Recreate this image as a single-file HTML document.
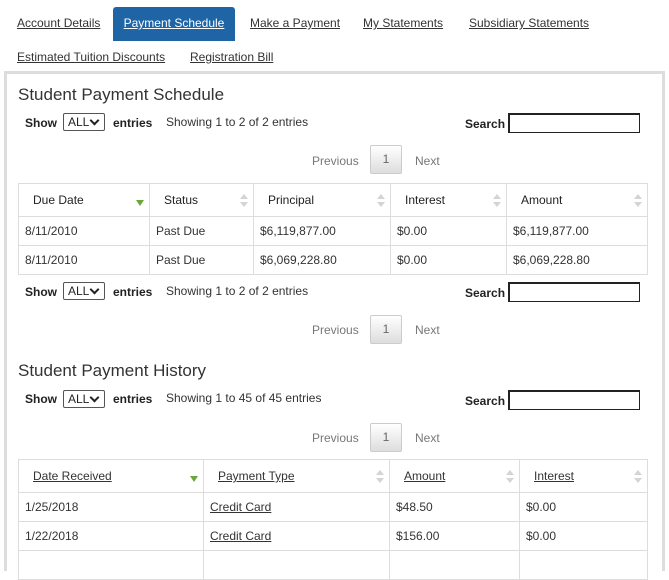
<!DOCTYPE html>
<html><head><meta charset="utf-8"><style>
*{margin:0;padding:0;box-sizing:border-box}
body{width:669px;height:553px;overflow:hidden;background:#fff;font-family:"Liberation Sans",sans-serif;font-size:12px;color:#333;position:relative}
.a{position:absolute;white-space:nowrap}
.u{text-decoration:underline;color:#333}
.tab{position:absolute;left:113px;top:7px;width:122px;height:34px;background:#1f65a6;border-radius:3px 3px 0 0;color:#fff;text-decoration:underline;text-align:center;line-height:32px}
.panel{position:absolute;left:4px;top:71px;width:661px;height:500px;border:3px solid #ddd;border-bottom:none}
h2{position:absolute;font-weight:normal;font-size:17px;color:#333;left:18px}
.b{font-weight:bold;color:#222}
.sel{position:absolute;width:42px;height:18px;border:1px solid #555;border-radius:2px;font-size:12px;line-height:16px;padding-left:4px;color:#222}
.sel:after{content:"";position:absolute;right:6px;top:3px;width:5px;height:5px;border-right:2px solid #222;border-bottom:2px solid #222;transform:rotate(45deg)}
.inp{position:absolute;left:508px;width:132px;height:20px;border:1px solid #222;border-top-width:2px;border-left-width:2px}
.pg{position:absolute;width:32px;height:29px;border:1px solid #ccc;border-radius:2px;background:linear-gradient(#fff,#ddd);text-align:center;line-height:27px;color:#666}
.g{color:#777}
table{position:absolute;left:18px;border-collapse:collapse;font-size:12px}
td,th{border:1px solid #ddd;text-align:left;padding:0 6px;font-weight:normal;position:relative}
th{height:33px;padding-left:14px;color:#222}
td{height:29px;color:#333}
.s:after{content:"";position:absolute;right:5px;top:10px;border:4px solid transparent;border-bottom:5px solid #d4d4d4;border-top:none}
.s:before{content:"";position:absolute;right:5px;top:18px;border:4px solid transparent;border-top:5px solid #d4d4d4;border-bottom:none}
.d:after{content:"";position:absolute;right:5px;top:16px;border:4px solid transparent;border-top:6px solid #6aa83a;border-bottom:none}
</style></head><body>
<span class="a u" style="left:17px;top:16px">Account Details</span>
<div class="tab">Payment Schedule</div>
<span class="a u" style="left:250px;top:16px">Make a Payment</span>
<span class="a u" style="left:363px;top:16px">My Statements</span>
<span class="a u" style="left:469px;top:16px">Subsidiary Statements</span>
<span class="a u" style="left:17px;top:50px">Estimated Tuition Discounts</span>
<span class="a u" style="left:190px;top:50px">Registration Bill</span>
<div class="panel"></div>

<h2 style="top:85px">Student Payment Schedule</h2>
<span class="a b" style="left:25px;top:116px">Show</span><div class="sel" style="left:63px;top:113px">ALL</div><span class="a b" style="left:113px;top:116px">entries</span>
<span class="a" style="left:166px;top:115px">Showing 1 to 2 of 2 entries</span>
<span class="a b" style="left:465px;top:117px">Search</span><div class="inp" style="top:113px"></div>
<span class="a g" style="left:312px;top:154px">Previous</span><div class="pg" style="left:370px;top:145px">1</div><span class="a g" style="left:415px;top:154px">Next</span>
<table style="top:183px;width:630px">
<tr><th class="d" style="width:131px">Due Date</th><th class="s" style="width:104px">Status</th><th class="s" style="width:137px">Principal</th><th class="s" style="width:116px">Interest</th><th class="s">Amount</th></tr>
<tr><td>8/11/2010</td><td>Past Due</td><td>$6,119,877.00</td><td>$0.00</td><td>$6,119,877.00</td></tr>
<tr><td>8/11/2010</td><td>Past Due</td><td>$6,069,228.80</td><td>$0.00</td><td>$6,069,228.80</td></tr>
</table>
<span class="a b" style="left:25px;top:285px">Show</span><div class="sel" style="left:63px;top:282px">ALL</div><span class="a b" style="left:113px;top:285px">entries</span>
<span class="a" style="left:166px;top:284px">Showing 1 to 2 of 2 entries</span>
<span class="a b" style="left:465px;top:286px">Search</span><div class="inp" style="top:282px"></div>
<span class="a g" style="left:312px;top:323px">Previous</span><div class="pg" style="left:370px;top:315px">1</div><span class="a g" style="left:415px;top:323px">Next</span>

<h2 style="top:361px">Student Payment History</h2>
<span class="a b" style="left:25px;top:392px">Show</span><div class="sel" style="left:63px;top:390px">ALL</div><span class="a b" style="left:113px;top:392px">entries</span>
<span class="a" style="left:166px;top:391px">Showing 1 to 45 of 45 entries</span>
<span class="a b" style="left:465px;top:394px">Search</span><div class="inp" style="top:390px"></div>
<span class="a g" style="left:312px;top:431px">Previous</span><div class="pg" style="left:370px;top:423px">1</div><span class="a g" style="left:415px;top:431px">Next</span>
<table style="top:459px;width:630px">
<tr><th class="d" style="width:185px"><span class="u">Date Received</span></th><th class="s" style="width:186px"><span class="u">Payment Type</span></th><th class="s" style="width:130px"><span class="u">Amount</span></th><th class="s"><span class="u">Interest</span></th></tr>
<tr><td>1/25/2018</td><td><span class="u">Credit Card</span></td><td>$48.50</td><td>$0.00</td></tr>
<tr><td>1/22/2018</td><td><span class="u">Credit Card</span></td><td>$156.00</td><td>$0.00</td></tr>
<tr><td></td><td></td><td></td><td></td></tr>
</table>
</body></html>
